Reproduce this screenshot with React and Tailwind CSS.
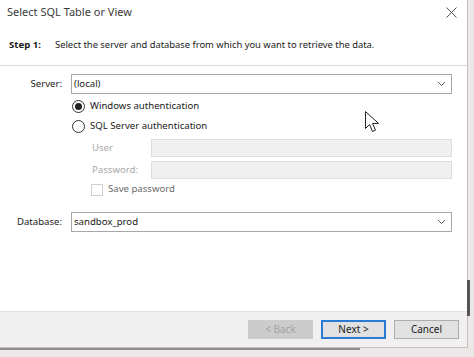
function Chevron() {
  return (
    <svg width="9" height="6" viewBox="0 0 9 6" className="text-[#555]">
      <path d="M1 1l3.5 3.5L8 1" fill="none" stroke="currentColor" strokeWidth="1" />
    </svg>
  );
}

function Radio({ checked }) {
  return (
    <span className="flex h-[13px] w-[13px] items-center justify-center rounded-full border border-[#333] bg-white">
      {checked && <span className="h-[7px] w-[7px] rounded-full bg-[#222]" />}
    </span>
  );
}

function Cursor() {
  return (
    <svg
      width="14"
      height="22"
      viewBox="0 0 14 22"
      className="absolute left-[365px] top-[111px]"
    >
      <path
        d="M0.5 0.5v17l4-4 3 7 3-1.3-3-6.8h6z"
        fill="#fff"
        stroke="#222"
        strokeWidth="1"
        strokeLinejoin="round"
      />
    </svg>
  );
}

export default function App() {
  return (
    <div className="relative h-[357px] w-[474px] overflow-hidden bg-[#ece8e8] font-['Noto_Sans','Liberation_Sans',sans-serif] text-[9.6px] text-[#1a1a1a]">
      <div className="flex h-[348px] w-[468px] flex-col border-r border-b border-[#c9bcbc] bg-white">
        {/* title + step header */}
        <div className="flex h-[66px] flex-col border-b border-[#d9d9d9]">
          <div className="flex h-[24px] items-center justify-between pl-[7px] pr-[10px]">
            <span className="text-[11px] text-[#3a3a3a]">Select SQL Table or View</span>
            <svg width="11" height="11" viewBox="0 0 11 11">
              <path d="M0.5 0.5l10 10M10.5 0.5l-10 10" stroke="#555" strokeWidth="1" />
            </svg>
          </div>
          <div className="mt-[14px] flex items-center pl-[9px]">
            <span className="w-[46px] font-bold">Step 1:</span>
            <span className="text-[9.4px]">Select the server and database from which you want to retrieve the data.</span>
          </div>
        </div>

        {/* form */}
        <div className="flex flex-1 flex-col pt-[8px] pr-[15px]">
          <div className="flex items-center">
            <span className="w-[63px] pr-[1px] text-right">Server:</span>
            <div className="ml-[8px] flex h-[20px] flex-1 items-center justify-between border border-[#a8a8a8] pl-[2px] pr-[5px]">
              <span>(local)</span>
              <Chevron />
            </div>
          </div>

          <div className="ml-[72px] mt-[2px] flex h-[20px] items-center gap-[5px]">
            <Radio checked />
            <span>Windows authentication</span>
          </div>
          <div className="ml-[72px] flex h-[20px] items-center gap-[5px]">
            <Radio />
            <span>SQL Server authentication</span>
          </div>

          <div className="mt-[3px] flex items-center">
            <span className="ml-[92px] w-[59px] text-[#a8a8a8]">User</span>
            <div className="h-[18px] flex-1 border border-[#dedede] bg-[#f0f0f0]" />
          </div>
          <div className="mt-[4px] flex items-center">
            <span className="ml-[92px] w-[59px] text-[#a8a8a8]">Password:</span>
            <div className="h-[18px] flex-1 border border-[#dedede] bg-[#f0f0f0]" />
          </div>
          <div className="ml-[91px] mt-[1px] flex h-[19px] items-center gap-[5px]">
            <span className="h-[12px] w-[12px] border border-[#cfcfcf] bg-white" />
            <span className="text-[#6a6a6a]">Save password</span>
          </div>

          <div className="mt-[13px] flex items-center">
            <span className="w-[63px] pr-[1px] text-right">Database:</span>
            <div className="ml-[8px] flex h-[20px] flex-1 items-center justify-between border border-[#a8a8a8] pl-[2px] pr-[5px]">
              <span>sandbox_prod</span>
              <Chevron />
            </div>
          </div>
        </div>

        {/* buttons */}
        <div className="flex h-[36px] items-center justify-end gap-[8px] border-t border-[#e3e3e3] bg-[#f0f0f0] pr-[8px]">
          <button className="h-[19px] w-[65px] border border-[#cccccc] bg-[#cccccc] text-[10px] text-[#a3a3a3]">
            &lt; Back
          </button>
          <button className="h-[19px] w-[65px] border-2 border-[#2a7bd3] bg-[#e1e1e1] text-[10px]">
            Next &gt;
          </button>
          <button className="h-[19px] w-[65px] border border-[#adadad] bg-[#e1e1e1] text-[10px]">
            Cancel
          </button>
        </div>
      </div>
      <div className="h-[2px] w-[360px] bg-[#8e8e8e]" />
      <div className="absolute right-[4px] top-[280px] h-[36px] w-[3px] bg-[#555]" />
      <Cursor />
    </div>
  );
}
